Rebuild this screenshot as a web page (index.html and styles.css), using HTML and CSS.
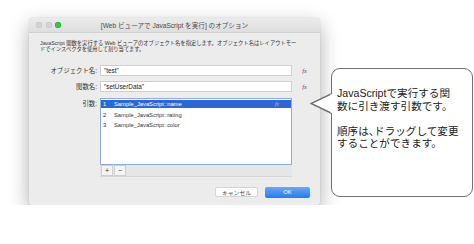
FILE: index.html
```html
<!DOCTYPE html>
<html lang="ja">
<head>
    <meta charset="UTF-8">
    <title>Web ビューアで JavaScript を実行 のオプション</title>
    <link rel="stylesheet" href="styles.css">
</head>
<body>
    <div class="stage">
        <div class="window">
            <div class="titlebar">
                <div class="lights">
                    <span class="light"></span>
                    <span class="light"></span>
                    <span class="light green"></span>
                </div>
                <div class="title">[Web ビューアで JavaScript を実行] のオプション</div>
                <div></div>
            </div>

            <div class="content">
                <p class="desc">JavaScript 関数を実行する Web ビューアのオブジェクト名を指定します。オブジェクト名はレイアウトモー<br>ドでインスペクタを使用して割り当てます。</p>

                <div class="form">
                    <label class="label">オブジェクト名:</label>
                    <div class="field">"test"</div>
                    <span class="fx">fx</span>

                    <label class="label">関数名:</label>
                    <div class="field">"setUserData"</div>
                    <span class="fx">fx</span>

                    <label class="label top">引数:</label>
                    <div class="list-wrap">
                        <ul class="list">
                            <li class="selected"><span class="num">1</span><span class="name">Sample_JavaScript::name</span><span class="row-fx">fx</span></li>
                            <li><span class="num">2</span><span class="name">Sample_JavaScript::rating</span></li>
                            <li><span class="num">3</span><span class="name">Sample_JavaScript::color</span></li>
                        </ul>
                        <div class="list-bar">
                            <button class="small-btn">+</button>
                            <button class="small-btn">−</button>
                        </div>
                    </div>
                    <span></span>
                </div>

                <div class="buttons">
                    <button class="btn cancel">キャンセル</button>
                    <button class="btn ok">OK</button>
                </div>
            </div>
        </div>

        <div class="callout">
            <svg class="pointer" width="24" height="22" viewBox="0 0 24 22">
                <polyline points="22,0.5 1,10.5 22,20.5" fill="#fff" stroke="#707070" stroke-width="1.4"/>
                <rect x="20.5" y="1.3" width="4" height="18.4" fill="#fff"/>
            </svg>
            <p>JavaScriptで実行する関<br>数に引き渡す引数です。<br><br>順序は<span class="narrow">、</span>ドラッグして変更<br>することができます。</p>
        </div>
    </div>
</body>
</html>
```

FILE: styles.css
```css
body {
    margin: 0;
    background-color: #fff;
    font-family: "Liberation Sans", "Noto Sans CJK JP", sans-serif;
    color: #222;
}

.stage {
    display: flex;
    align-items: flex-start;
    padding: 18px 0 0 29px;
}

.window {
    width: 291px;
    height: 187px;
    margin-right: 11px;
    background-color: #ececec;
    border-radius: 4px 4px 2px 2px;
    box-shadow: 0 7px 20px rgba(0, 0, 0, 0.32), 0 0 1px rgba(0, 0, 0, 0.3);
    display: flex;
    flex-direction: column;
}

.titlebar {
    height: 14px;
    display: grid;
    grid-template-columns: 1fr auto 1fr;
    align-items: center;
    background: linear-gradient(#ebebeb, #dedede);
    border-bottom: 1px solid #d2d2d2;
    border-radius: 4px 4px 0 0;
}

.lights {
    display: flex;
    gap: 3.5px;
    padding-left: 7px;
}

.light {
    width: 6px;
    height: 6px;
    border-radius: 50%;
    background-color: #d3d3d3;
    box-shadow: inset 0 0 0 0.5px #c2c2c2;
}

.light.green {
    background-color: #35c648;
    box-shadow: inset 0 0 0 0.5px #23a836;
}

.title {
    font-size: 6.6px;
    color: #4a4a4a;
    white-space: nowrap;
}

.content {
    padding: 7px 10px 0 11px;
    flex: 1;
    display: flex;
    flex-direction: column;
}

.desc {
    margin: 0;
    font-size: 5.3px;
    line-height: 6.4px;
    color: #333;
    white-space: nowrap;
}

.form {
    display: grid;
    grid-template-columns: 60px 192px 16px;
    row-gap: 5px;
    margin-top: 12px;
    align-items: center;
}

.label {
    font-size: 6.4px;
    text-align: right;
    padding-right: 3px;
    color: #333;
}

.label.top {
    align-self: start;
    padding-top: 2px;
}

.field {
    height: 9px;
    line-height: 9px;
    background-color: #fff;
    border: 0.5px solid #d0d0d0;
    font-size: 6.4px;
    padding-left: 3px;
    color: #222;
}

.fx {
    font-family: "Liberation Serif", serif;
    font-style: italic;
    font-size: 6.5px;
    color: #555;
    text-align: right;
    padding-right: 1px;
}

.list-wrap {
    display: flex;
    flex-direction: column;
    margin-top: 1px;
}

.list {
    list-style: none;
    margin: 0;
    padding: 1px 0 0;
    height: 64px;
    background-color: #fff;
    border: 1px solid #8fa9e6;
}

.list li {
    display: flex;
    align-items: center;
    height: 10px;
    font-size: 5.8px;
    color: #333;
}

.list li.selected {
    height: 8px;
    margin-bottom: 2px;
    background-color: #2c67d3;
    color: #fff;
}

.num {
    width: 11px;
    padding-left: 2px;
}

.name {
    flex: 1;
}

.row-fx {
    font-family: "Liberation Serif", serif;
    font-style: italic;
    font-size: 5.5px;
    color: #a8c0f0;
    padding-right: 12px;
}

.list-bar {
    display: flex;
    height: 11px;
    background-color: #e6e6e6;
    border-bottom: 1px solid #d6d6d6;
}

.small-btn {
    width: 12px;
    height: 11px;
    padding: 0;
    margin-left: 1px;
    border: 0.5px solid #cfcfcf;
    background-color: #f4f4f4;
    font-size: 7px;
    line-height: 9px;
    color: #333;
    font-family: "Liberation Sans", sans-serif;
}

.buttons {
    display: flex;
    justify-content: flex-end;
    align-items: center;
    gap: 7px;
    margin-top: 10px;
}

.btn {
    font-family: "Liberation Sans", "Noto Sans CJK JP", sans-serif;
    padding: 0;
    border-radius: 2px;
    font-size: 5.8px;
}

.cancel {
    width: 43px;
    height: 10px;
    background-color: #fff;
    border: 0.5px solid #d4d4d4;
    color: #444;
}

.ok {
    width: 45px;
    height: 11px;
    border: none;
    background: linear-gradient(#67a8f9, #2c77ec);
    color: #fff;
}

.callout {
    position: relative;
    width: 142px;
    height: 129px;
    margin-top: 50px;
    box-sizing: border-box;
    border: 1.4px solid #707070;
    border-radius: 9px;
    background-color: #fff;
}

.pointer {
    position: absolute;
    left: -22px;
    top: 23.5px;
}

.callout p {
    margin: 0;
    padding: 18px 0 0 5px;
    font-size: 10.6px;
    line-height: 12.5px;
    color: #222;
    white-space: nowrap;
}

.narrow {
    font-feature-settings: "halt";
}
```
